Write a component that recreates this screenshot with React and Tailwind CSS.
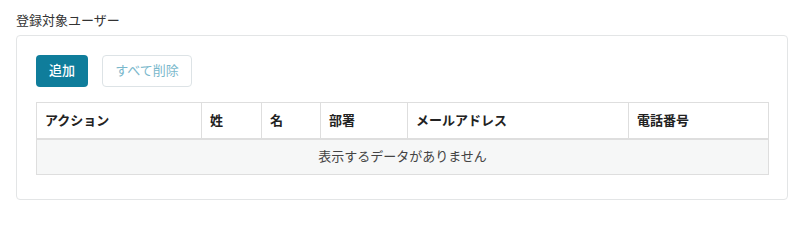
export default function App() {
  const cols = [
    { label: "アクション", w: "w-[165px]" },
    { label: "姓", w: "w-[60px]" },
    { label: "名", w: "w-[59px]" },
    { label: "部署", w: "w-[87px]" },
    { label: "メールアドレス", w: "w-[221px]" },
    { label: "電話番号", w: "w-[140px]" },
  ];

  return (
    <div
      className="w-[800px] h-[225px] bg-white px-4 pt-[11px] text-[#333]"
      style={{ fontFamily: '"Noto Sans", "Noto Sans CJK JP", sans-serif' }}
    >
      <h2 className="text-[13px] leading-[18px] mb-[6px]">登録対象ユーザー</h2>

      {/* Card */}
      <div className="w-[772px] border border-[#e3e5e6] rounded-[4px] px-[19px] pt-[19px] pb-6">
        <div className="flex gap-[14px] mb-[15px]">
          <button className="h-8 w-[52px] rounded-[4px] bg-[#0f7d9b] text-white text-[13px] font-medium">
            追加
          </button>
          <button className="h-8 w-[90px] rounded-[4px] border border-[#dde3e6] bg-white text-[#7ab8cc] text-[13px]">
            すべて削除
          </button>
        </div>

        <table className="w-[732px] border-collapse table-fixed">
          <thead>
            <tr>
              {cols.map((c) => (
                <th
                  key={c.label}
                  className={`${c.w} h-9 border border-[#dedede] border-b-2 px-2 text-left text-[13px] font-bold text-[#222]`}
                >
                  {c.label}
                </th>
              ))}
            </tr>
          </thead>
          <tbody>
            <tr>
              <td
                colSpan={6}
                className="h-9 border border-[#dedede] bg-[#f6f7f7] text-center text-[13px] text-[#444]"
              >
                表示するデータがありません
              </td>
            </tr>
          </tbody>
        </table>
      </div>
    </div>
  );
}
